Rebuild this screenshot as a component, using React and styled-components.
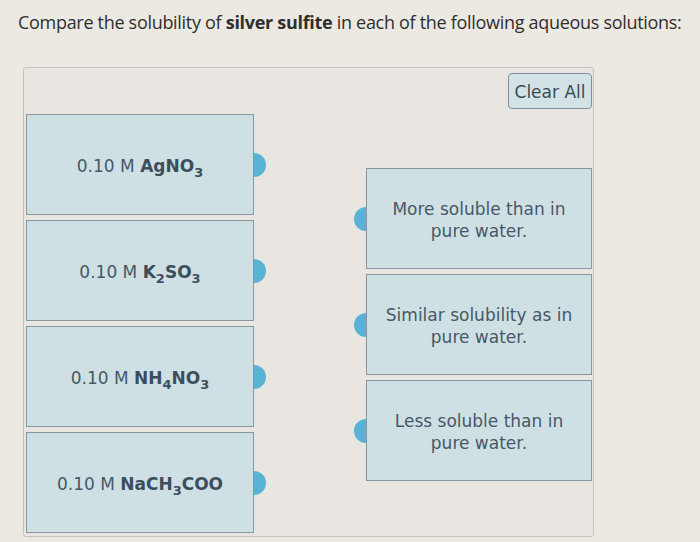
import React from "react";
import styled, { createGlobalStyle } from "styled-components";

const Global = createGlobalStyle`
  html, body { margin: 0; padding: 0; }
  body {
    background: #ece8e2;
    width: 700px;
    height: 542px;
    overflow: hidden;
  }
`;

const Page = styled.div`
  display: flex;
  flex-direction: column;
  padding: 9px 0 0 18px;
`;

const Title = styled.h1`
  margin: 0;
  font-family: "Open Sans", "Liberation Sans", sans-serif;
  font-weight: 400;
  font-size: 18px;
  line-height: 26px;
  color: #2f2f2f;
  letter-spacing: -0.3px;
  white-space: nowrap;
  b { font-weight: 700; }
`;

const Panel = styled.div`
  margin: 32px 0 0 5px;
  width: 571px;
  height: 470px;
  box-sizing: border-box;
  border: 1px solid #c4c2bd;
  border-radius: 3px;
  background: #e9e6e1;
  padding: 5px 1px 0 2px;
  display: flex;
  flex-direction: column;
`;

const Header = styled.div`
  display: flex;
  justify-content: flex-end;
`;

const ClearButton = styled.button`
  width: 84px;
  height: 36px;
  box-sizing: border-box;
  border: 1px solid #7f8e98;
  border-radius: 4px;
  background: #d2e2e5;
  color: #3b4a56;
  font-family: "DejaVu Sans", Verdana, sans-serif;
  font-size: 17px;
  padding: 1px 0 0;
  cursor: pointer;
`;

const Columns = styled.div`
  display: flex;
  justify-content: space-between;
  margin-top: 5px;
`;

const Column = styled.div`
  display: flex;
  flex-direction: column;
  gap: 5px;
  width: ${(p) => p.$w}px;
  margin-top: ${(p) => p.$top}px;
`;

const Card = styled.div`
  position: relative;
  height: 101px;
  box-sizing: border-box;
  border: 1px solid #8797a0;
  background: #cfe0e4;
  display: flex;
  align-items: center;
  justify-content: center;
  text-align: center;
  font-family: "DejaVu Sans", Verdana, sans-serif;
  font-size: 17px;
  line-height: 22px;
  color: #475866;
  b { font-weight: 700; color: #3a4e5e; }
  sub { font-size: 13px; vertical-align: -5px; line-height: 0; }
`;

const Tab = styled.span`
  position: absolute;
  top: 50%;
  margin-top: -12px;
  width: 12px;
  height: 24px;
  background: #59b3d5;
  ${(p) =>
    p.$side === "right"
      ? `right: -13px; border-radius: 0 12px 12px 0;`
      : `left: -13px; border-radius: 12px 0 0 12px;`}
`;

const Label = styled.div`
  padding: ${(p) => p.$shift || 0}px 14px 0;
`;

const left = [
  <>0.10 M <b>AgNO<sub>3</sub></b></>,
  <>0.10 M <b>K<sub>2</sub>SO<sub>3</sub></b></>,
  <>0.10 M <b>NH<sub>4</sub>NO<sub>3</sub></b></>,
  <>0.10 M <b>NaCH<sub>3</sub>COO</b></>,
];

const right = [
  ["More soluble than in", "pure water."],
  ["Similar solubility as in", "pure water."],
  ["Less soluble than in", "pure water."],
];

export default function App() {
  return (
    <>
      <Global />
      <Page>
        <Title>
          Compare the solubility of <b>silver sulfite</b> in each of the following aqueous solutions:
        </Title>
        <Panel>
          <Header>
            <ClearButton>Clear All</ClearButton>
          </Header>
          <Columns>
            <Column $w={228} $top={0}>
              {left.map((c, i) => (
                <Card key={i}>
                  <Label $shift={2}>{c}</Label>
                  <Tab $side="right" />
                </Card>
              ))}
            </Column>
            <Column $w={226} $top={54}>
              {right.map((r, i) => (
                <Card key={i}>
                  <Label $shift={3}>
                    {r[0]}
                    <br />
                    {r[1]}
                  </Label>
                  <Tab $side="left" />
                </Card>
              ))}
            </Column>
          </Columns>
        </Panel>
      </Page>
    </>
  );
}
